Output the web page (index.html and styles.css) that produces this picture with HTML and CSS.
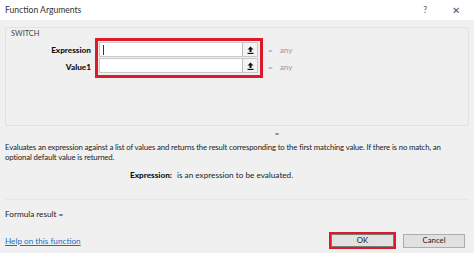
FILE: index.html
```html
<!DOCTYPE html>
<html>
<head><meta charset="utf-8"><link rel="stylesheet" href="styles.css"></head>
<body>
<div class="dialog">
  <div class="titlebar">
    <span class="title">Function Arguments</span>
    <span class="tb-btns"><span class="q">?</span><span class="x">✕</span></span>
  </div>
  <div class="body">
    <div class="group">
      <div class="legend">SWITCH</div>
      <div class="args">
        <div class="labels">
          <div class="lbl">Expression</div>
          <div class="lbl">Value1</div>
        </div>
        <div class="redbox">
          <div class="field"><span class="caret"></span><span class="upbtn"><svg width="7" height="8" viewBox="0 0 7 8"><path d="M3.5 0.5 L6.5 3.5 H4.5 V6 H2.5 V3.5 H0.5 Z" fill="#111"/><rect x="0.5" y="6.8" width="6" height="1.2" fill="#111"/></svg></span></div>
          <div class="field"><span class="upbtn"><svg width="7" height="8" viewBox="0 0 7 8"><path d="M3.5 0.5 L6.5 3.5 H4.5 V6 H2.5 V3.5 H0.5 Z" fill="#111"/><rect x="0.5" y="6.8" width="6" height="1.2" fill="#111"/></svg></span></div>
        </div>
        <div class="vals">
          <div class="val"><span class="eq">=</span><span class="any">any</span></div>
          <div class="val"><span class="eq">=</span><span class="any">any</span></div>
        </div>
      </div>
    </div>
    <div class="result-eq">=</div>
    <p class="desc">Evaluates an expression against a list of values and returns the result corresponding to the first matching value. If there is no match, an optional default value is returned.</p>
    <div class="argdesc"><b>Expression:</b><span>is an expression to be evaluated.</span></div>
    <div class="bottom">
      <div class="formula">Formula result =</div>
      <div class="footer">
        <a class="help" href="#">Help on this function</a>
        <div class="buttons">
          <span class="okwrap"><span class="btn">OK</span></span>
          <span class="btn cancel">Cancel</span>
        </div>
      </div>
    </div>
  </div>
</div>
</body>
</html>
```
FILE: styles.css
```css
html, body { margin: 0; padding: 0; }
body { width: 474px; height: 253px; overflow: hidden; font-family: Lato, "Open Sans", sans-serif; font-size: 8px; color: #222; background: #f0f0f0; }
.dialog { width: 474px; height: 253px; display: flex; flex-direction: column; }
.titlebar { height: 20px; background: #fff; display: flex; align-items: center; justify-content: space-between; padding: 0 0 0 5px; }
.title { font-size: 8.6px; color: #333; }
.tb-btns { display: flex; align-items: center; }
.q { font-size: 8.5px; color: #555; margin-right: 25px; }
.x { font-size: 10px; color: #555; margin-right: 14px; }
.body { flex: 1; display: flex; flex-direction: column; padding: 0 5px; }
.group { margin-top: 7px; height: 97px; border: 1px solid #e2e2e2; border-radius: 2px; position: relative; }
.legend { font-size: 7.4px; color: #444; padding: 1px 0 0 5px; height: 9px; }
.args { display: flex; margin-top: 0; }
.labels { width: 85px; display: flex; flex-direction: column; align-items: flex-end; padding-top: 4px; }
.lbl { font-weight: 900; font-size: 8.2px; height: 17px; line-height: 17px; color: #111; }
.redbox { margin-left: 4px; border: 3px solid #dd1a2a; padding: 1px 2px 2px 1px; display: flex; flex-direction: column; gap: 1px; }
.field { width: 159px; height: 15px; background: #fff; border: 1px solid #c8c8c8; box-sizing: border-box; position: relative; display: flex; align-items: center; justify-content: flex-end; }
.caret { position: absolute; left: 3px; top: 2px; width: 1px; height: 10px; background: #333; }
.upbtn { width: 14px; height: 13px; border-left: 1px solid #bbb; background: #f4f4f4; display: flex; align-items: center; justify-content: center; }
.vals { display: flex; flex-direction: column; padding-top: 4px; margin-left: 5px; }
.val { height: 17px; line-height: 17px; color: #999; font-size: 8.2px; }
.eq { margin-right: 7px; }
.result-eq { text-align: center; padding-left: 80px; margin-top: 3px; height: 10px; line-height: 10px; font-size: 7.5px; color: #444; }
.desc { margin: 3px 0 0 0; font-size: 7.8px; letter-spacing: -0.15px; line-height: 10px; color: #222; width: 462px; }
.argdesc { margin-top: 8px; padding-left: 125px; font-size: 8.2px; line-height: 10px; display: flex; }
.argdesc b { color: #111; width: 47px; font-weight: 900; }
.bottom { margin-top: 19px; border-top: 1px solid #e6e6e6; flex: 1; display: flex; flex-direction: column; }
.formula { margin-top: 9px; font-size: 8.2px; line-height: 10px; }
.footer { display: flex; justify-content: space-between; align-items: center; margin-top: 13px; }
.help { color: #1a6fc4; font-size: 8.2px; text-decoration: underline; }
.buttons { display: flex; align-items: center; gap: 7px; margin-right: 4px; }
.okwrap { border: 2px solid #dd1a2a; display: flex; }
.btn { width: 62px; height: 11px; line-height: 11px; background: #e1e1e1; border: 1px solid #adadad; text-align: center; font-size: 7.8px; color: #222; display: inline-block; }
.okwrap .btn { width: 61px; border-color: #7a7a7a; }
.cancel { width: 60px; height: 12px; }
```
